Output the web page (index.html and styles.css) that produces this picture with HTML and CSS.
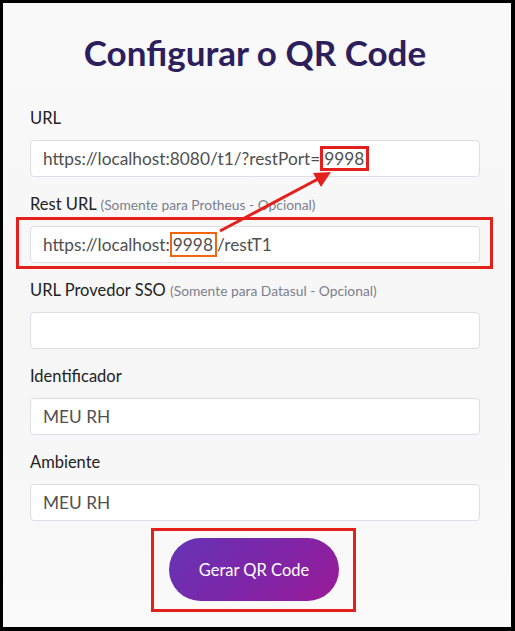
FILE: index.html
```html
<!DOCTYPE html>
<html lang="pt-BR">
<head>
<meta charset="utf-8">
<title>Configurar o QR Code</title>
<link rel="stylesheet" href="styles.css">
</head>
<body>
<main class="frame">
  <h1 class="title">Configurar o QR Code</h1>
  <form class="form">
    <div class="field">
      <label class="label">URL</label>
      <div class="input">https://localhost:8080/t1/?restPort=<span class="mark mark-red">9998</span></div>
    </div>
    <div class="field">
      <label class="label">Rest URL <span class="hint">(Somente para Protheus - Opcional)</span></label>
      <div class="highlight-area">
        <div class="input">https://localhost:<span class="mark mark-orange">9998</span>/restT1</div>
      </div>
    </div>
    <div class="field">
      <label class="label">URL Provedor SSO <span class="hint">(Somente para Datasul - Opcional)</span></label>
      <div class="input"></div>
    </div>
    <div class="field">
      <label class="label">Identificador</label>
      <div class="input">MEU RH</div>
    </div>
    <div class="field">
      <label class="label">Ambiente</label>
      <div class="input">MEU RH</div>
    </div>
    <div class="actions">
      <div class="btn-highlight">
        <button type="button" class="btn">Gerar QR Code</button>
      </div>
    </div>
  </form>
</main>
<svg class="arrow" width="515" height="631" viewBox="0 0 515 631" aria-hidden="true">
  <line x1="220" y1="231" x2="318" y2="179" stroke="#e3201b" stroke-width="3"/>
  <polygon points="331,172 313,173 321,187" fill="#e3201b"/>
</svg>
</body>
</html>
```

FILE: styles.css
```css
html, body {
  margin: 0;
  height: 100%;
}

body {
  background: #000;
  padding: 3px 4px 4px 3px;
  box-sizing: border-box;
  position: relative;
  font-family: Lato, "Noto Sans", sans-serif;
}

.frame {
  height: 100%;
  box-sizing: border-box;
  background: linear-gradient(180deg, #f9f9f9 0%, #f6f6f6 60%, #fafafa 100%);
  padding: 29px 31px 0 27px;
}

.title {
  margin: 0 0 34px;
  text-align: center;
  font-size: 35px;
  line-height: 40px;
  font-weight: 700;
  color: #2c1f5c;
}

.form {
  display: flex;
  flex-direction: column;
}

.field + .field {
  margin-top: 15px;
}

.label {
  display: block;
  font-size: 16.5px;
  line-height: 24px;
  color: #222;
  margin-bottom: 10px;
}

.hint {
  font-size: 13.8px;
  line-height: 16px;
  color: #7b7f8c;
}

.input {
  height: 37px;
  box-sizing: border-box;
  border: 1px solid #dcdee4;
  border-radius: 4px;
  background: #fff;
  padding: 0 12px;
  display: flex;
  align-items: center;
  font-size: 17.3px;
  color: #505050;
  white-space: pre;
}

.mark {
  display: inline-block;
  line-height: 19px;
  margin: -3px 0;
}

.mark-red {
  border: 3px solid #e3201b;
  padding: 0 2px 0 1px;
}

.mark-orange {
  border: 2px solid #f26510;
  padding: 1px 2px 1px 1px;
}

.highlight-area {
  position: relative;
}

.highlight-area::after {
  content: "";
  position: absolute;
  top: -9px;
  bottom: -6px;
  left: -14px;
  right: -13px;
  border: 3px solid #e3201b;
  pointer-events: none;
}

.actions {
  display: flex;
  justify-content: center;
  margin-top: 7px;
}

.btn-highlight {
  border: 3px solid #e3201b;
  padding: 7px 14px 8px 15px;
  margin-left: -3px;
}

.btn {
  width: 170px;
  height: 63px;
  border: none;
  border-radius: 32px;
  background: linear-gradient(135deg, #6434b4 0%, #7d26a8 50%, #9a1a98 100%);
  color: #fff;
  font-family: Lato, "Noto Sans", sans-serif;
  font-size: 16.5px;
}

.arrow {
  position: absolute;
  left: 0;
  top: 0;
  pointer-events: none;
}
```
